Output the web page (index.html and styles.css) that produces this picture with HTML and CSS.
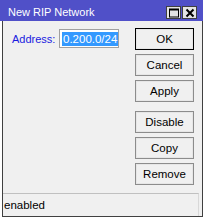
FILE: index.html
```html
<!DOCTYPE html>
<html lang="en">
<head>
  <meta charset="UTF-8">
  <title>New RIP Network</title>
  <link rel="stylesheet" href="styles.css">
</head>
<body>
<div class="window">
  <div class="title-bar">
    <span class="title">New RIP Network</span>
    <div class="title-buttons">
      <span class="tb-btn">
        <svg width="12" height="10" viewBox="0 0 12 10"><rect x="1.5" y="1.5" width="9" height="7.5" fill="none" stroke="#000" stroke-width="1"/><line x1="1" y1="1.5" x2="11" y2="1.5" stroke="#000" stroke-width="2"/></svg>
      </span>
      <span class="tb-btn">
        <svg width="12" height="10" viewBox="0 0 12 10"><path d="M2.5 1.5 L9.5 8.5 M9.5 1.5 L2.5 8.5" stroke="#000" stroke-width="2"/></svg>
      </span>
    </div>
  </div>
  <div class="window-body">
    <div class="main">
      <div class="form">
        <div class="row">
          <label class="label">Address:</label>
          <div class="input"><span class="selected">0.200.0/24</span><span class="caret"></span></div>
        </div>
      </div>
      <div class="buttons">
        <button class="btn default">OK</button>
        <button class="btn">Cancel</button>
        <button class="btn">Apply</button>
        <button class="btn spaced">Disable</button>
        <button class="btn">Copy</button>
        <button class="btn">Remove</button>
      </div>
    </div>
    <div class="status">enabled</div>
  </div>
</div>
</body>
</html>
```

FILE: styles.css
```css
* {
  margin: 0;
  padding: 0;
  box-sizing: border-box;
}

body {
  background: #ffffff;
  font-family: 'Liberation Sans', Arial, sans-serif;
  font-size: 11px;
  color: #000;
}

.window {
  width: 203px;
  height: 217px;
  display: flex;
  flex-direction: column;
}

.title-bar {
  height: 21px;
  background: #5050c8;
  display: flex;
  align-items: flex-start;
  padding: 0 6px 0 8px;
}

.title {
  color: #fff;
  font-size: 11px;
  line-height: 13px;
  padding-top: 6px;
}

.title-buttons {
  margin-left: auto;
  display: flex;
  gap: 1px;
  padding-top: 6px;
}

.tb-btn {
  width: 15px;
  height: 13px;
  background: #e4e4e4;
  border: 1px solid #404040;
  display: flex;
  align-items: center;
  justify-content: center;
}

.window-body {
  flex: 1;
  margin-left: 2px;
  background: #f0f0f0;
  border: 1px solid #404040;
  border-top: none;
  display: flex;
  flex-direction: column;
}

.main {
  display: flex;
  justify-content: space-between;
  padding: 7px 8px 0 9px;
}

.row {
  display: flex;
  align-items: center;
  margin-top: 1px;
}

.label {
  width: 47px;
  color: #1a1ae0;
}

.input {
  width: 60px;
  height: 19px;
  background: #fff;
  border: 1px solid #a0a0a0;
  display: flex;
  align-items: center;
  padding-left: 2px;
}

.selected {
  background: #3399ff;
  color: #fff;
  line-height: 14px;
  padding: 0 1px;
  font-size: 11.5px;
}

.caret {
  width: 1px;
  height: 14px;
  background: #000;
}

.buttons {
  display: flex;
  flex-direction: column;
  gap: 4px;
}

.btn {
  width: 59px;
  height: 22px;
  background: #f0f0f0;
  border: 1px solid #8c8c8c;
  box-shadow: inset 0 0 0 1px #e6e6e6;
  font-family: 'Liberation Sans', Arial, sans-serif;
  font-size: 11.5px;
  color: #000;
}

.btn.default {
  border-color: #000;
}

.btn.spaced {
  margin-top: 5px;
}

.status {
  margin-top: auto;
  margin-right: 3px;
  height: 23px;
  border-top: 1px solid #c0c0c0;
  border-right: 1px solid #d8d8d8;
  line-height: 22px;
  font-size: 11.5px;
  padding-left: 1px;
}
```
